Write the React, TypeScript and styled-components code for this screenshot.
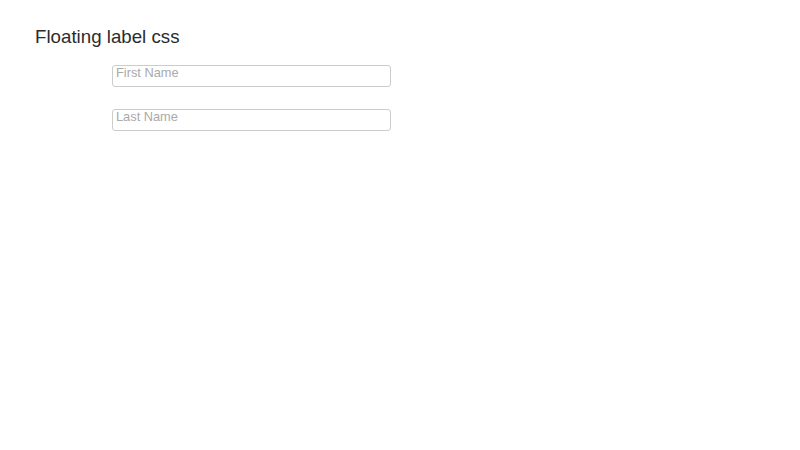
import React from "react";
import styled, { createGlobalStyle } from "styled-components";

const Global = createGlobalStyle`
  html, body { margin: 0; padding: 0; background: #fff; }
  body { font-family: "Liberation Sans", Arial, sans-serif; }
`;

const Page = styled.div`
  padding: 25px 35px;
`;

const Title = styled.h1`
  margin: 0 0 17px 0;
  font-size: 18.72px;
  font-weight: 400;
  line-height: 23px;
  color: #2b2b2b;
`;

const Form = styled.form`
  display: flex;
  flex-direction: column;
  gap: 22px;
  margin-left: 77px;
  width: 279px;
`;

const Field = styled.div`
  position: relative;
`;

const Input = styled.input`
  box-sizing: border-box;
  display: block;
  width: 100%;
  height: 22px;
  border: 1px solid #ccc;
  border-radius: 3px;
  padding: 0 3px;
  font: 12px "Liberation Sans", Arial, sans-serif;
  outline: none;
`;

const Label = styled.label`
  position: absolute;
  left: 4px;
  top: 0px;
  font-size: 12.8px;
  line-height: 15px;
  color: #aaa;
  pointer-events: none;
`;

export default function App() {
  return (
    <>
      <Global />
      <Page>
        <Title>Floating label css</Title>
        <Form>
          <Field>
            <Input id="fn" />
            <Label htmlFor="fn">First Name</Label>
          </Field>
          <Field>
            <Input id="ln" />
            <Label htmlFor="ln">Last Name</Label>
          </Field>
        </Form>
      </Page>
    </>
  );
}
